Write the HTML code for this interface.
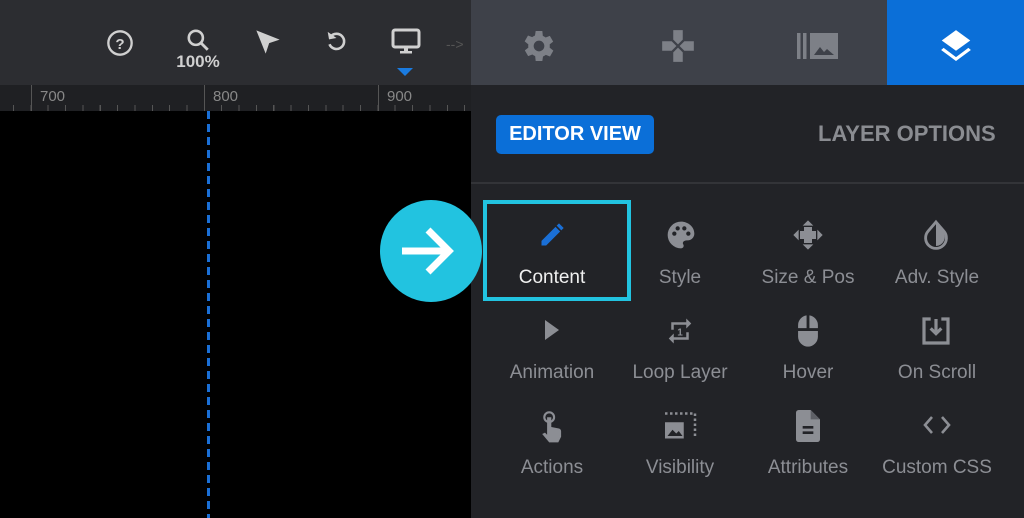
<!DOCTYPE html>
<html><head><meta charset="utf-8"><style>
*{margin:0;padding:0;box-sizing:border-box}
body{width:1024px;height:518px;overflow:hidden;background:#000;font-family:"Liberation Sans",sans-serif;position:relative}
.abs{position:absolute}
.top{left:0;top:0;width:471px;height:85px;background:#2c2d31}
.tabs{left:471px;top:0;width:416px;height:85px;background:#3e4149}
.blue{left:887px;top:0;width:137px;height:85px;background:#0b6fd8}
.ruler{left:0;top:85px;width:471px;height:26px;background:#1f2023}
.panel{left:471px;top:85px;width:553px;height:433px;background:#222327}
.lbl{position:absolute;width:128px;text-align:center;color:#8c8e94;font-size:19px}
</style></head><body>
<div class="abs top"></div>
<div class="abs tabs"></div>
<div class="abs blue"></div>
<div class="abs ruler">
 <div class="abs" style="left:31px;top:0;width:1px;height:26px;background:#555"></div>
 <div class="abs" style="left:204px;top:0;width:1px;height:26px;background:#555"></div>
 <div class="abs" style="left:378px;top:0;width:1px;height:26px;background:#555"></div>
 <div class="abs" style="left:40px;top:3px;color:#888;font-size:15px">700</div>
 <div class="abs" style="left:213px;top:3px;color:#888;font-size:15px">800</div>
 <div class="abs" style="left:387px;top:3px;color:#888;font-size:15px">900</div>
 <div class="abs" style="left:0;top:20px;width:471px;height:6px;background:repeating-linear-gradient(90deg,transparent 0 13px,#555 13px 14px,transparent 14px 17.35px)"></div>
</div>
<div class="abs" style="left:207px;top:111px;width:3px;height:407px;background:repeating-linear-gradient(180deg,#1a6fd6 0 8px,transparent 8px 13px)"></div>

<svg class="abs" style="left:106px;top:29px" width="28" height="28" viewBox="0 0 24 24"><circle cx="12" cy="12" r="10" fill="none" stroke="#d0d0d0" stroke-width="2"/><text x="12" y="17" text-anchor="middle" font-size="13" font-weight="bold" fill="#d0d0d0" font-family="Liberation Sans">?</text></svg>
<svg class="abs" style="left:185px;top:27px" width="26" height="26" viewBox="0 0 24 24"><circle cx="10" cy="10" r="6.5" fill="none" stroke="#d0d0d0" stroke-width="2.4"/><path d="M15 15l6 6" stroke="#d0d0d0" stroke-width="2.6"/></svg>
<div class="abs" style="left:170px;top:52px;width:56px;text-align:center;color:#d0d0d0;font-size:17px;font-weight:bold">100%</div>
<svg class="abs" style="left:254px;top:28px" width="28" height="28" viewBox="0 0 24 24"><path d="M2 2l20 8-9 3-3 9z" fill="#d0d0d0"/></svg>
<svg class="abs" style="left:323px;top:28px" width="26" height="26" viewBox="0 0 24 24"><path d="M7 8a7 7 0 1 1-1 7" fill="none" stroke="#d0d0d0" stroke-width="2.4"/><path d="M5 3v7h7z" fill="#d0d0d0" transform="rotate(-10 8 7)"/></svg>
<svg class="abs" style="left:391px;top:28px" width="30" height="28" viewBox="0 0 30 28"><rect x="2" y="2" width="26" height="17" rx="2" fill="none" stroke="#d0d0d0" stroke-width="3"/><rect x="13" y="19" width="4" height="4" fill="#d0d0d0"/><rect x="9" y="23" width="12" height="2.5" fill="#d0d0d0"/></svg>
<div class="abs" style="left:397px;top:68px;width:0;height:0;border-left:8px solid transparent;border-right:8px solid transparent;border-top:8px solid #1a7be0"></div>
<div class="abs" style="left:446px;top:36px;color:#555;font-size:14px">--&gt;</div>

<svg class="abs" style="left:519px;top:26px" width="40" height="40" viewBox="0 0 24 24"><path fill="#7d8087" d="M19.4 13a7.5 7.5 0 0 0 0-2l2.1-1.6-2-3.5-2.5 1a7.6 7.6 0 0 0-1.7-1L15 3h-4l-.4 2.7a7.6 7.6 0 0 0-1.7 1l-2.5-1-2 3.5L6.6 11a7.5 7.5 0 0 0 0 2l-2.1 1.6 2 3.5 2.5-1a7.6 7.6 0 0 0 1.7 1L11 21h4l.4-2.7a7.6 7.6 0 0 0 1.7-1l2.5 1 2-3.5z" transform="translate(-1 0)"/><circle cx="12" cy="12" r="3.2" fill="#3e4149"/></svg>
<svg class="abs" style="left:659px;top:27px" width="38" height="38" viewBox="0 0 24 24"><path fill="#7d8087" d="M9 2h6v6l-3 3-3-3zM2 9h6l3 3-3 3H2zM22 9h-6l-3 3 3 3h6zM9 22h6v-6l-3-3-3 3z"/></svg>
<svg class="abs" style="left:797px;top:31px" width="42" height="30" viewBox="0 0 42 30"><rect x="0" y="2" width="3.5" height="26" fill="#7d8087"/><rect x="6" y="2" width="3.5" height="26" fill="#7d8087"/><rect x="13" y="2" width="28" height="26" fill="#7d8087"/><path d="M17 24l6-8 4 5 3-3 7 6z" fill="#3e4149"/></svg>
<svg class="abs" style="left:937px;top:27px" width="38" height="38" viewBox="0 0 24 24"><path fill="#fff" d="M12 2l9 6.5-9 6.5-9-6.5z"/><path fill="#fff" d="M4.2 13.2l-1.6 1.3L12 21.5l9.4-7-1.6-1.3L12 19z"/></svg>

<div class="abs panel">
 <div class="abs" style="left:25px;top:30px;width:158px;height:39px;background:#0b6fd8;border-radius:5px;color:#fff;font-weight:bold;font-size:20px;line-height:39px;text-align:center">EDITOR VIEW</div>
 <div class="abs" style="left:347px;top:36px;color:#8a8c91;font-weight:bold;font-size:22px">LAYER OPTIONS</div>
 <div class="abs" style="left:0;top:97px;width:553px;height:2px;background:#333438"></div>
</div>

<div class="abs" style="left:483px;top:200px;width:148px;height:101px;border:4px solid #22c3e0"></div>
<div class="abs" style="left:380px;top:200px;width:102px;height:102px;border-radius:50%;background:#22c3e0"></div>
<svg class="abs" style="left:398px;top:220px" width="62" height="62" viewBox="0 0 62 62"><path d="M4 31h46M30 10l21 21-21 21" fill="none" stroke="#fff" stroke-width="7"/></svg>

<div style="position:absolute;left:488px;top:0">
 <svg class="abs" style="left:50px;top:220px" width="28" height="30" viewBox="0 0 24 24"><path fill="#1a6fd6" d="M3 21v-4L15 5l4 4L7 21zM16 4l2-2 4 4-2 2z"/></svg>
 <div class="lbl" style="left:0;top:267px;color:#f0f0f0">Content</div>

 <svg class="abs" style="left:177px;top:219px" width="32" height="32" viewBox="0 0 24 24"><path fill="#8c8e94" d="M12 2a10 10 0 0 0 0 20c1.5 0 2-1 2-2s-1-1.5-.5-2.5S15 16 17 16a5 5 0 0 0 5-5C22 6 17.5 2 12 2z"/><circle cx="7" cy="11" r="1.6" fill="#222327"/><circle cx="9.5" cy="7" r="1.6" fill="#222327"/><circle cx="14.5" cy="7" r="1.6" fill="#222327"/><circle cx="17.5" cy="11" r="1.6" fill="#222327"/></svg>
 <div class="lbl" style="left:128px;top:267px">Style</div>

 <svg class="abs" style="left:304px;top:219px" width="32" height="32" viewBox="0 0 24 24"><path fill="#8c8e94" d="M12 1l4 4h-8zM12 23l-4-4h8zM1 12l4-4v8zM23 12l-4 4V8z"/><path fill="#8c8e94" d="M9 6h6v3h3v6h-3v3H9v-3H6V9h3z"/></svg>
 <div class="lbl" style="left:256px;top:267px">Size &amp; Pos</div>

 <svg class="abs" style="left:435px;top:219px" width="26" height="32" viewBox="0 0 20 24"><path d="M10 2l6 7a8 8 0 1 1-12 0z" fill="none" stroke="#8c8e94" stroke-width="2.2"/><path d="M10 3l5.5 6.5a7 7 0 0 1-5.5 11z" fill="#8c8e94"/></svg>
 <div class="lbl" style="left:385px;top:267px">Adv. Style</div>

 <svg class="abs" style="left:55px;top:319px" width="18" height="22" viewBox="0 0 18 22"><path d="M2 1l14 10-14 10z" fill="#8c8e94"/></svg>
 <div class="lbl" style="left:0;top:362px">Animation</div>

 <svg class="abs" style="left:177px;top:315px" width="30" height="32" viewBox="0 0 24 24"><path fill="#8c8e94" d="M7 7h10v3l4-4-4-4v3H5v6h2zM17 17H7v-3l-4 4 4 4v-3h12v-6h-2z"/><text x="12" y="15.5" font-size="8" text-anchor="middle" fill="#8c8e94" font-family="Liberation Sans" font-weight="bold">1</text></svg>
 <div class="lbl" style="left:128px;top:362px">Loop Layer</div>

 <svg class="abs" style="left:308px;top:314px" width="24" height="34" viewBox="0 0 16 24"><path fill="#8c8e94" d="M7 1v9H1V8a7 7 0 0 1 6-7zM9 1v9h6V8a7 7 0 0 0-6-7zM1 12h14v4a7 7 0 0 1-14 0z"/></svg>
 <div class="lbl" style="left:256px;top:362px">Hover</div>

 <svg class="abs" style="left:432px;top:315px" width="32" height="32" viewBox="0 0 24 24"><path d="M8 3H3v18h18V3h-5" fill="none" stroke="#8c8e94" stroke-width="2.4"/><path d="M12 3v10M8 10l4 4 4-4" fill="none" stroke="#8c8e94" stroke-width="2.4"/></svg>
 <div class="lbl" style="left:385px;top:362px">On Scroll</div>

 <svg class="abs" style="left:50px;top:410px" width="28" height="34" viewBox="0 0 20 24"><circle cx="8" cy="5" r="3.5" fill="none" stroke="#8c8e94" stroke-width="1.5"/><path fill="#8c8e94" d="M6.5 5h3v7l5 1a2 2 0 0 1 2 2v4l-2 4H8l-5-6 2-1 1.5 1.5z"/></svg>
 <div class="lbl" style="left:0;top:457px">Actions</div>

 <svg class="abs" style="left:175px;top:411px" width="34" height="30" viewBox="0 0 26 24"><path d="M1 2h24v20" fill="none" stroke="#8c8e94" stroke-width="2" stroke-dasharray="2 2"/><rect x="1" y="9" width="15" height="13" fill="#8c8e94"/><path d="M3 20l4-5 3 3 2-2 3 4z" fill="#222327"/></svg>
 <div class="lbl" style="left:128px;top:457px">Visibility</div>

 <svg class="abs" style="left:308px;top:410px" width="24" height="32" viewBox="0 0 18 24"><path fill="#8c8e94" d="M2 0h9l7 7v15a2 2 0 0 1-2 2H2a2 2 0 0 1-2-2V2a2 2 0 0 1 2-2z"/><path d="M5 13h8M5 17h8" stroke="#222327" stroke-width="2"/><path d="M11 0v7h7" fill="#5e6066"/></svg>
 <div class="lbl" style="left:256px;top:457px">Attributes</div>

 <svg class="abs" style="left:434px;top:414px" width="30" height="22" viewBox="0 0 30 22"><path d="M10 3l-7 8 7 8M20 3l7 8-7 8" fill="none" stroke="#8c8e94" stroke-width="2.6"/></svg>
 <div class="lbl" style="left:385px;top:457px">Custom CSS</div>
</div>
</body></html>
